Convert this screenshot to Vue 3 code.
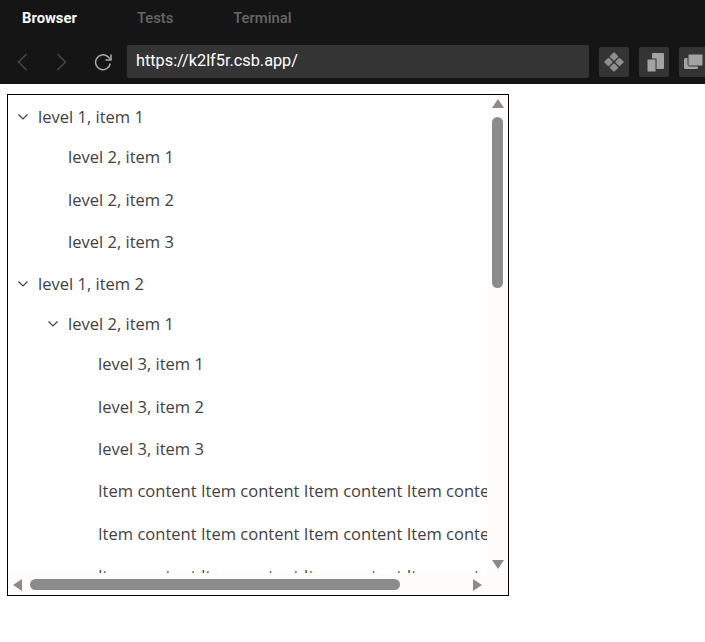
<script setup>
const tabs = [
  { label: 'Browser', active: true },
  { label: 'Tests', active: false },
  { label: 'Terminal', active: false }
]
const long = 'Item content Item content Item content Item content Item content'
const rows = [
  { text: 'level 1, item 1', level: 1, parent: true },
  { text: 'level 2, item 1', level: 2 },
  { text: 'level 2, item 2', level: 2 },
  { text: 'level 2, item 3', level: 2 },
  { text: 'level 1, item 2', level: 1, parent: true },
  { text: 'level 2, item 1', level: 2, parent: true },
  { text: 'level 3, item 1', level: 3 },
  { text: 'level 3, item 2', level: 3 },
  { text: 'level 3, item 3', level: 3 },
  { text: long, level: 3 },
  { text: long, level: 3 },
  { text: long, level: 3 }
]
</script>

<template>
  <div class="page">
    <header class="chrome">
      <nav class="tabs">
        <span v-for="t in tabs" :key="t.label" class="tab" :class="{ active: t.active }">{{ t.label }}</span>
      </nav>
      <div class="toolbar">
        <svg class="nav-icon" width="10" height="18" viewBox="0 0 10 18"><path d="M9.500 1 1.500 9l8 8" fill="none" stroke="#454545" stroke-width="1.600"/></svg>
        <svg class="nav-icon fwd" width="10" height="18" viewBox="0 0 10 18"><path d="M.5 1l8 8-8 8" fill="none" stroke="#454545" stroke-width="1.600"/></svg>
        <svg class="reload" width="18" height="18" viewBox="0 0 18 18">
          <path d="M16.300 10.500A7.400 7.400 0 1 1 13.800 3.600L16.400 6" fill="none" stroke="#a8a8a8" stroke-width="1.500"/>
          <path d="M17 1.500V7H11.500" fill="none" stroke="#a8a8a8" stroke-width="1.500"/>
        </svg>
        <div class="url">https://k2lf5r.csb.app/</div>
        <div class="btns">
          <button class="btn">
            <svg width="20" height="20" viewBox="0 0 20 20" fill="#8e8e8e">
              <rect x="6.800" y="1.300" width="6.400" height="6.400" rx="1" transform="rotate(45 10 4.500)"/>
              <rect x="6.800" y="12.300" width="6.400" height="6.400" rx="1" transform="rotate(45 10 15.500)"/>
              <rect x="1.300" y="6.800" width="6.400" height="6.400" rx="1" transform="rotate(45 4.500 10)"/>
              <rect x="12.300" y="6.800" width="6.400" height="6.400" rx="1" transform="rotate(45 15.500 10)"/>
            </svg>
          </button>
          <button class="btn">
            <svg width="20" height="20" viewBox="0 0 20 20" fill="#a3a3a3">
              <rect x="8" y="1" width="12" height="16" rx="1"/>
              <rect x="3" y="7" width="9" height="13" stroke="#343434" stroke-width="1"/>
            </svg>
          </button>
          <button class="btn">
            <svg width="20" height="20" viewBox="0 0 20 20">
              <rect x="0" y="6" width="14" height="11" rx="1.500" fill="#a3a3a3"/>
              <rect x="4" y="2" width="15" height="12" rx="1.500" fill="#a3a3a3" stroke="#343434" stroke-width="1"/>
            </svg>
          </button>
        </div>
      </div>
    </header>

    <section class="box">
      <div class="viewport">
        <div
          v-for="(r, i) in rows"
          :key="i"
          class="row"
          :class="[`lv${r.level}`, { parent: r.parent }]"
        >
          <svg v-if="r.parent" class="caret" width="10" height="6" viewBox="0 0 10 6"><path d="M.5.5 5 5 9.500.5" fill="none" stroke="#424242" stroke-width="1.200"/></svg>
          <span class="label">{{ r.text }}</span>
        </div>
      </div>

      <div class="track-v">
        <span class="arrow up"></span>
        <span class="thumb-v"></span>
        <span class="arrow down"></span>
      </div>
      <div class="track-h">
        <span class="arrow left"></span>
        <span class="thumb-h"></span>
        <span class="arrow right"></span>
      </div>
    </section>
  </div>
</template>

<style scoped>
.page {
  width: 705px;
  height: 642px;
  overflow: hidden;
  background: #fff;
}
.chrome {
  height: 84px;
  background: #151515;
  box-sizing: border-box;
  font-family: Roboto, sans-serif;
}
.tabs {
  display: flex;
  gap: 60px;
  height: 35px;
  padding-left: 22px;
  align-items: center;
}
.tab {
  font-size: 14.8px;
  font-weight: 500;
  color: #66666a;
}
.tab.active {
  color: #fff;
  font-weight: 700;
}
.toolbar {
  display: flex;
  align-items: center;
  height: 33px;
  margin-top: 10px;
  padding-left: 17px;
}
.nav-icon { flex: none; }
.fwd { margin-left: 30px; }
.reload { flex: none; margin-left: 27px; }
.url {
  flex: none;
  width: 462px;
  height: 33px;
  margin-left: 15px;
  box-sizing: border-box;
  padding-left: 9px;
  background: #343434;
  border-radius: 2px;
  color: #fff;
  font-size: 16.3px;
  line-height: 32px;
}
.btns {
  display: flex;
  gap: 10px;
  margin-left: 10px;
  flex: none;
}
.btn {
  width: 30px;
  height: 30px;
  padding: 0;
  border: 0;
  border-radius: 2px;
  background: #343434;
  display: flex;
  align-items: center;
  justify-content: center;
}
.box {
  position: relative;
  width: 500px;
  height: 500px;
  margin: 10px 0 0 7px;
  border: 1px solid #000;
  overflow: hidden;
  font-family: "Open Sans", "Noto Sans", sans-serif;
  color: #424242;
}
.viewport {
  width: 479px;
  height: 478px;
  overflow: hidden;
  padding-top: 1px;
  box-sizing: border-box;
}
.row {
  display: flex;
  align-items: center;
  height: 42.4px;
  box-sizing: border-box;
  white-space: nowrap;
  font-size: 16.55px;
}
.row.parent {
  height: 39.8px;
  padding-top: 2px;
}
.lv2 { padding-left: 60px; }
.lv3 { padding-left: 90px; }
.lv1.parent { padding-left: 10px; }
.lv2.parent { padding-left: 40px; }
.caret {
  flex: none;
  margin-right: 10px;
}
.track-v {
  position: absolute;
  top: 0;
  right: 0;
  width: 21px;
  height: 500px;
  background: #fdfcfa;
}
.track-h {
  position: absolute;
  left: 0;
  bottom: 0;
  width: 500px;
  height: 22px;
  background: #fdfcfa;
}
.thumb-v {
  position: absolute;
  left: 5px;
  top: 22px;
  width: 11px;
  height: 171px;
  border-radius: 6px;
  background: #8b8b8b;
}
.thumb-h {
  position: absolute;
  left: 22px;
  top: 6px;
  width: 370px;
  height: 11px;
  border-radius: 6px;
  background: #8b8b8b;
}
.arrow {
  position: absolute;
  width: 0;
  height: 0;
  border-style: solid;
  border-color: transparent;
}
.up {
  left: 4.5px;
  top: 4px;
  border-width: 0 6px 9px;
  border-bottom-color: #8b8b8b;
}
.down {
  left: 4.5px;
  top: 465px;
  border-width: 9px 6px 0;
  border-top-color: #8b8b8b;
}
.left {
  left: 5px;
  top: 5.5px;
  border-width: 6px 9px 6px 0;
  border-right-color: #8b8b8b;
}
.right {
  left: 465px;
  top: 5.5px;
  border-width: 6px 0 6px 9px;
  border-left-color: #8b8b8b;
}
</style>

<style>
html, body {
  margin: 0;
  overflow: hidden;
  background: #fff;
}
</style>
